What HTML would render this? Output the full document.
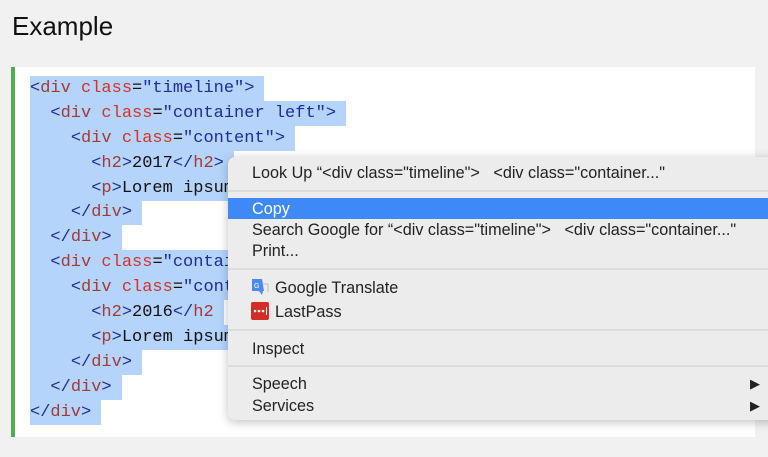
<!DOCTYPE html>
<html><head><style>
body{margin:0;width:768px;height:457px;background:#f1f1f1;overflow:hidden;position:relative;font-family:"Liberation Sans",sans-serif}
h1{position:absolute;left:12px;top:11px;margin:0;font-weight:normal;font-size:26px;color:#111}
.box{position:absolute;left:11px;top:67px;width:744px;height:370px;background:#fff;border-left:4px solid #4caf50;box-sizing:border-box}
.ln{position:absolute;height:25px;line-height:25px;font-family:"Liberation Mono",monospace;font-size:17px;background:#b4d4fb;white-space:pre;padding-right:10px;color:#111}
.b{color:#1f2a9e}.t{color:#a33a33}.a{color:#d0342c}.v{color:#1f2a9e}
.menu{position:absolute;left:228px;top:157px;width:560px;height:263px;background:#ececec;border-radius:7px;box-shadow:0 2px 10px rgba(0,0,0,.25);font-size:16.2px;color:#222}
.it{position:absolute;left:24px;line-height:20px;white-space:pre}
.sep{position:absolute;left:0;right:0;height:2px;background:#dcdcdc}
.hl{position:absolute;left:0;right:0;top:41px;height:21px;background:#3d89f5}
.ar{position:absolute;left:522px;font-size:13px}
</style></head><body>
<h1>Example</h1>
<div class="box"></div>
<div class="ln" style="left:30px;top:76px"><span class="b">&lt;</span><span class="t">div</span> <span class="a">class</span>=<span class="v">"timeline"</span><span class="b">&gt;</span></div>
<div class="ln" style="left:30px;top:101px">  <span class="b">&lt;</span><span class="t">div</span> <span class="a">class</span>=<span class="v">"container left"</span><span class="b">&gt;</span></div>
<div class="ln" style="left:30px;top:126px">    <span class="b">&lt;</span><span class="t">div</span> <span class="a">class</span>=<span class="v">"content"</span><span class="b">&gt;</span></div>
<div class="ln" style="left:30px;top:151px">      <span class="b">&lt;</span><span class="t">h2</span><span class="b">&gt;</span>2017<span class="b">&lt;/</span><span class="t">h2</span><span class="b">&gt;</span></div>
<div class="ln" style="left:30px;top:176px">      <span class="b">&lt;</span><span class="t">p</span><span class="b">&gt;</span>Lorem ipsum</div>
<div class="ln" style="left:30px;top:200px">    <span class="b">&lt;/</span><span class="t">div</span><span class="b">&gt;</span></div>
<div class="ln" style="left:30px;top:225px">  <span class="b">&lt;/</span><span class="t">div</span><span class="b">&gt;</span></div>
<div class="ln" style="left:30px;top:250px">  <span class="b">&lt;</span><span class="t">div</span> <span class="a">class</span>=<span class="v">"container"</span></div>
<div class="ln" style="left:30px;top:275px">    <span class="b">&lt;</span><span class="t">div</span> <span class="a">class</span>=<span class="v">"content"</span></div>
<div class="ln" style="left:30px;top:300px">      <span class="b">&lt;</span><span class="t">h2</span><span class="b">&gt;</span>2016<span class="b">&lt;/</span><span class="t">h2</span></div>
<div class="ln" style="left:30px;top:325px">      <span class="b">&lt;</span><span class="t">p</span><span class="b">&gt;</span>Lorem ipsum</div>
<div class="ln" style="left:30px;top:350px">    <span class="b">&lt;/</span><span class="t">div</span><span class="b">&gt;</span></div>
<div class="ln" style="left:30px;top:375px">  <span class="b">&lt;/</span><span class="t">div</span><span class="b">&gt;</span></div>
<div class="ln" style="left:30px;top:400px"><span class="b">&lt;/</span><span class="t">div</span><span class="b">&gt;</span></div>
<div class="menu">
<div class="it" style="top:6px">Look Up “&lt;div class="timeline"&gt;   &lt;div class="container..."</div>
<div class="sep" style="top:33px"></div>
<div class="hl"></div>
<div class="it" style="top:42px;color:#fff">Copy</div>
<div class="it" style="top:63px">Search Google for “&lt;div class="timeline"&gt;   &lt;div class="container..."</div>
<div class="it" style="top:84px">Print...</div>
<div class="sep" style="top:111px"></div>
<svg style="position:absolute;left:23px;top:121px" width="18" height="18"><path d="M1 1h10l2 12H1z" fill="#4a8af0"/><text x="3" y="10" font-size="7" fill="#fff" font-family="Liberation Sans">G</text><path d="M8 13l3 4 1-4z" fill="#4a8af0"/><path d="M12 6h5v8" stroke="#bbb" fill="none"/></svg>
<div class="it" style="top:121px;left:47px">Google Translate</div>
<svg style="position:absolute;left:23px;top:145px" width="18" height="18"><rect width="18" height="18" rx="2" fill="#d32d27"/><circle cx="4" cy="9" r="1.3" fill="#fff"/><circle cx="8" cy="9" r="1.3" fill="#fff"/><circle cx="12" cy="9" r="1.3" fill="#fff"/><rect x="15" y="5" width="1" height="8" fill="#fff"/></svg>
<div class="it" style="top:145px;left:47px">LastPass</div>
<div class="sep" style="top:172px"></div>
<div class="it" style="top:182px">Inspect</div>
<div class="sep" style="top:208px"></div>
<div class="it" style="top:217px">Speech</div><div class="ar" style="top:219px">▶</div>
<div class="it" style="top:239px">Services</div><div class="ar" style="top:241px">▶</div>
</div>
</body></html>
